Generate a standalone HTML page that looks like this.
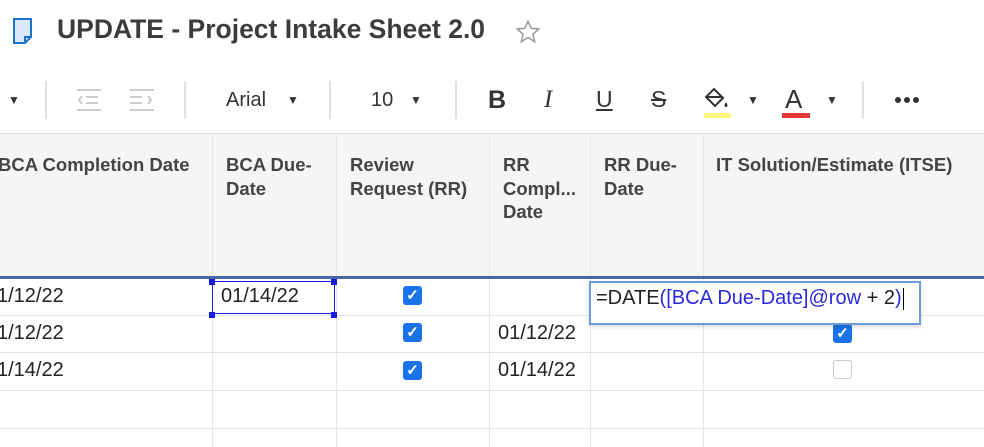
<!DOCTYPE html>
<html><head><style>
body{margin:0;width:984px;height:447px;overflow:hidden;background:#fff;font-family:"Liberation Sans",Arial,sans-serif;position:relative}
.a{position:absolute}
.title{left:57px;top:14px;font-size:26.5px;font-weight:bold;color:#3c3c3c}
.tb{color:#333;font-size:20px}
.sep{width:2px;height:38px;top:81px;background:#e0e0e0}
.hdr{left:0;top:133px;width:984px;height:144px;background:#f6f5f3;border-top:1px solid #dcdcdc}
.vl{width:1px;background:#e6e6e6}
.ht{font-size:18.5px;font-weight:bold;color:#444;line-height:23.5px;top:153px;white-space:nowrap}
.cell{font-size:20px;color:#222}
.hl{left:0;width:984px;height:1px;background:#e2e2e2}
.cb{width:19px;height:19px;border-radius:3px;background:#1a73e8;color:#fff;font-size:15px;text-align:center;line-height:19px;font-weight:bold}
</style></head><body>
<svg class="a" style="left:12px;top:17px" width="22" height="28" viewBox="0 0 22 28"><path d="M2 2h17v18l-6 6H2z" fill="#dce8fb" stroke="#1a73c8" stroke-width="2"/><path d="M13 26v-6h6" fill="none" stroke="#1a73c8" stroke-width="2"/></svg>
<div class="a title">UPDATE - Project Intake Sheet 2.0</div>
<svg class="a" style="left:515px;top:19px" width="26" height="26" viewBox="0 0 24 24"><path d="M12 2l2.9 6.6 7.1.6-5.4 4.7 1.6 7-6.2-3.7-6.2 3.7 1.6-7L2 9.2l7.1-.6z" fill="none" stroke="#999" stroke-width="1.4"/></svg>

<div class="a tb" style="left:8px;top:93px;font-size:12px">▼</div>
<div class="a sep" style="left:45px"></div>
<svg class="a" style="left:76px;top:88px" width="26" height="24"><g stroke="#ccc" stroke-width="2" fill="none"><path d="M1 2h24M10 9h12M10 15h12M1 22h24M6 8l-3 4 3 4"/></g></svg>
<svg class="a" style="left:129px;top:88px" width="26" height="24"><g stroke="#ccc" stroke-width="2" fill="none"><path d="M1 2h24M1 9h12M1 15h12M1 22h24M19 8l3 4-3 4"/></g></svg>
<div class="a sep" style="left:184px"></div>
<div class="a tb" style="left:226px;top:89px">Arial</div>
<div class="a tb" style="left:287px;top:93px;font-size:12px">▼</div>
<div class="a sep" style="left:329px"></div>
<div class="a tb" style="left:371px;top:89px">10</div>
<div class="a tb" style="left:410px;top:93px;font-size:12px">▼</div>
<div class="a sep" style="left:455px"></div>
<div class="a" style="left:488px;top:86px;font-size:25px;font-weight:bold;color:#333">B</div>
<div class="a" style="left:544px;top:86px;font-size:25px;font-style:italic;color:#333;font-family:'Liberation Serif',serif">I</div>
<div class="a" style="left:596px;top:86px;font-size:23px;color:#333;text-decoration:underline">U</div>
<div class="a" style="left:651px;top:86px;font-size:23px;color:#333;text-decoration:line-through">S</div>
<svg class="a" style="left:700px;top:86px" width="30" height="26"><path d="M14 3l9 9-8 8-9-9z M6 11h17" fill="none" stroke="#333" stroke-width="2"/><path d="M26 16c-2 3-2 5 0 5s2-2 0-5z" fill="#333"/></svg>
<div class="a" style="left:704px;top:113px;width:27px;height:5px;background:#fcf77e"></div>
<div class="a tb" style="left:747px;top:93px;font-size:12px">▼</div>
<div class="a" style="left:785px;top:84px;font-size:26px;color:#333">A</div>
<div class="a" style="left:782px;top:113px;width:28px;height:5px;background:#e53935"></div>
<div class="a tb" style="left:826px;top:93px;font-size:12px">▼</div>
<div class="a sep" style="left:862px"></div>
<svg class="a" style="left:894px;top:96px" width="26" height="8"><circle cx="4" cy="4" r="3" fill="#333"/><circle cx="13" cy="4" r="3" fill="#333"/><circle cx="22" cy="4" r="3" fill="#333"/></svg>

<div class="a hdr"></div>
<div class="a vl" style="left:212px;top:133px;height:314px"></div>
<div class="a vl" style="left:336px;top:133px;height:314px"></div>
<div class="a vl" style="left:489px;top:133px;height:314px"></div>
<div class="a vl" style="left:590px;top:133px;height:314px"></div>
<div class="a vl" style="left:703px;top:133px;height:314px"></div>
<div class="a ht" style="left:-2px">BCA Completion Date</div>
<div class="a ht" style="left:226px">BCA Due-<br>Date</div>
<div class="a ht" style="left:350px">Review<br>Request (RR)</div>
<div class="a ht" style="left:503px">RR<br>Compl...<br>Date</div>
<div class="a ht" style="left:604px">RR Due-<br>Date</div>
<div class="a ht" style="left:716px">IT Solution/Estimate (ITSE)</div>
<div class="a" style="left:0;top:276px;width:984px;height:3px;background:#4a65a0"></div>
<div class="a hl" style="top:315px"></div>
<div class="a hl" style="top:352px"></div>
<div class="a hl" style="top:390px"></div>
<div class="a hl" style="top:428px"></div>

<div class="a cell" style="left:-3px;top:285px">1/12/22</div>
<div class="a cell" style="left:-3px;top:322px">1/12/22</div>
<div class="a cell" style="left:-3px;top:359px">1/14/22</div>
<div class="a" style="left:212px;top:281px;width:123px;height:33px;border:1px solid #1a1ae0;box-sizing:border-box"></div>
<div class="a" style="left:209px;top:279px;width:6px;height:6px;background:#1a1ae0"></div>
<div class="a" style="left:331px;top:279px;width:6px;height:6px;background:#1a1ae0"></div>
<div class="a" style="left:209px;top:312px;width:6px;height:6px;background:#1a1ae0"></div>
<div class="a" style="left:331px;top:312px;width:6px;height:6px;background:#1a1ae0"></div>
<div class="a cell" style="left:221px;top:285px">01/14/22</div>
<div class="a cb" style="left:403px;top:286px">✓</div>
<div class="a cb" style="left:403px;top:323px">✓</div>
<div class="a cb" style="left:403px;top:361px">✓</div>
<div class="a cell" style="left:498px;top:322px">01/12/22</div>
<div class="a cell" style="left:498px;top:359px">01/14/22</div>
<div class="a cb" style="left:833px;top:324px">✓</div>
<div class="a" style="left:833px;top:360px;width:19px;height:19px;border:1px solid #ccc;border-radius:3px;box-sizing:border-box;background:#fff"></div>
<div class="a" style="left:589px;top:281px;width:332px;height:44px;border:2px solid #6b9bd8;box-sizing:border-box;background:#fff;box-shadow:0 2px 4px rgba(0,0,0,.15)"></div>
<div class="a cell" style="left:596px;top:287px;white-space:nowrap">=DATE<span style="color:#2a2ad8">([BCA Due-Date]@row</span> + 2<span style="color:#2a2ad8">)</span><span style="display:inline-block;width:1px;height:22px;background:#000;vertical-align:middle;margin-left:1px"></span></div>
</body></html>
